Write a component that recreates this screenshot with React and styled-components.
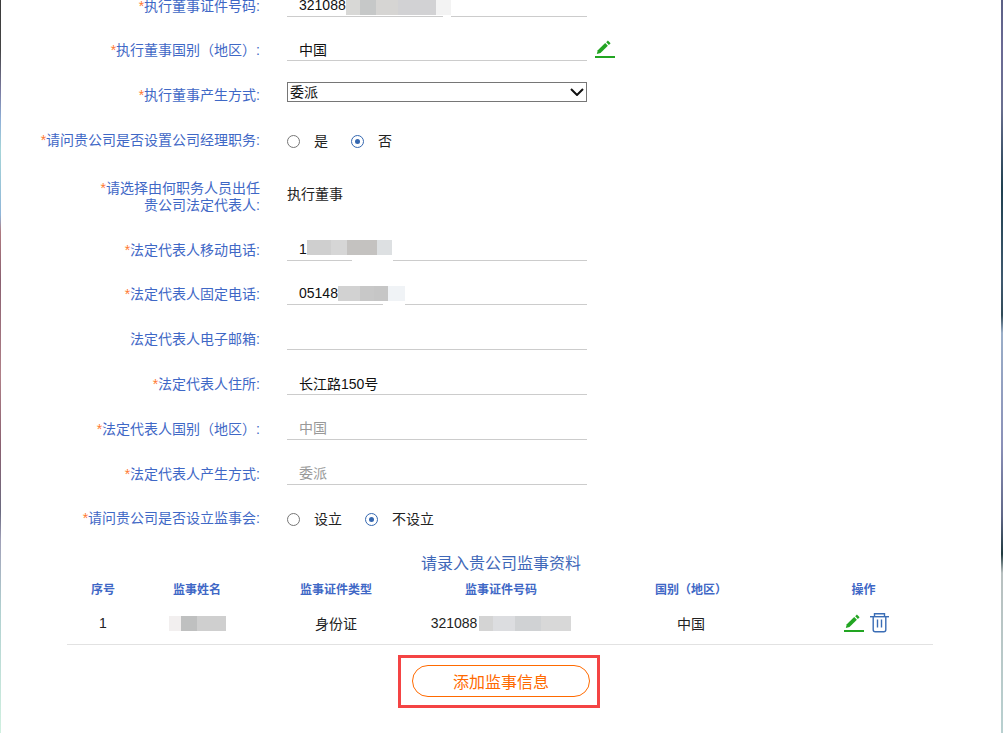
import React from "react";
import styled, { createGlobalStyle } from "styled-components";

const GlobalStyle = createGlobalStyle`
  html, body {
    margin: 0;
    padding: 0;
    background: #fff;
    overflow: hidden;
  }
  body {
    font-family: "Liberation Sans", "Noto Sans CJK SC", sans-serif;
    font-size: 14px;
  }
`;

const Page = styled.div`
  display: flex;
  width: 1003px;
  height: 733px;
  overflow: hidden;
`;

const EdgeStrip = styled.div`
  flex: none;
  width: ${(props) => props.$width}px;
  background: ${(props) => props.$colors};
`;

const Content = styled.main`
  flex: 1;
  display: flex;
  flex-direction: column;
`;

const Row = styled.div`
  display: flex;
  align-items: flex-end;
  height: ${(props) => props.$height}px;
`;

const Label = styled.label`
  flex: none;
  width: 259px;
  margin-right: 27px;
  margin-bottom: ${(props) => (props.$tight ? "-1px" : "1px")};
  text-align: right;
  color: #3f68c6;
  font-size: 14px;
  line-height: ${(props) => (props.$tight ? "17px" : "20px")};
  white-space: nowrap;
`;

const Required = styled.span`
  color: #ff7a33;
`;

const Field = styled.div`
  flex: none;
  display: flex;
  align-items: center;
  box-sizing: border-box;
  width: 300px;
  height: 21px;
  padding: 0 0 ${(props) => (props.$muted ? "4px" : "2px")} 12px;
  border-bottom: 1px solid #ccc;
  font-size: 14px;
  color: ${(props) => (props.$muted ? "#999" : "#111")};
`;

const Blur = styled.span`
  position: relative;
  flex: none;
  display: inline-block;
  width: ${(props) => props.$width}px;
  height: 15px;
  margin-top: ${(props) => props.$top || 0}px;
  margin-bottom: ${(props) => props.$bottom || 0}px;
  background: ${(props) => props.$bands};
  filter: blur(0.6px);

  /* white smear of the redaction, it runs over the underline */
  &::after {
    content: "";
    position: absolute;
    display: ${(props) => (props.$smearWidth ? "block" : "none")};
    left: ${(props) => props.$smearLeft}px;
    width: ${(props) => props.$smearWidth}px;
    bottom: -${(props) => props.$smearDepth}px;
    height: ${(props) => props.$smearDepth}px;
    background: #fff;
  }
`;

const SelectBox = styled.div`
  position: relative;
  flex: none;
  display: flex;
  width: 300px;
  height: 20px;
  margin-bottom: 4px;
`;

const IdSelect = styled.select`
  appearance: none;
  box-sizing: border-box;
  width: 100%;
  height: 100%;
  margin: 0;
  padding: 0 0 1px 2px;
  border: 1px solid #767676;
  border-radius: 0;
  background: #fff;
  color: #111;
  font-family: inherit;
  font-size: 14px;
`;

const SelectArrow = styled.svg`
  position: absolute;
  top: 6px;
  right: 3px;
  pointer-events: none;
`;

const EditButton = styled.span`
  display: flex;
  margin: 0 0 3px 8px;
`;

const RadioGroup = styled.div`
  display: flex;
  align-items: center;
  height: 20px;
  margin-bottom: 1px;
  font-size: 14px;
  color: #222;
`;

const RadioItem = styled.span`
  display: flex;
  align-items: center;
  margin-right: ${(props) => props.$gap}px;
`;

const RadioMark = styled.span`
  box-sizing: border-box;
  display: flex;
  align-items: center;
  justify-content: center;
  width: 13px;
  height: 13px;
  margin: 2px 14px 0 0;
  border: 1px solid ${(props) => (props.$checked ? "#3467b0" : "#767676")};
  border-radius: 50%;
  &::after {
    content: "";
    display: ${(props) => (props.$checked ? "block" : "none")};
    width: 5px;
    height: 5px;
    border-radius: 50%;
    background: #3467b0;
  }
`;

const PlainValue = styled.div`
  margin-bottom: 9px;
  font-size: 14px;
  line-height: 20px;
  color: #222;
`;

const Section = styled.section`
  width: 866px;
  margin-left: 66px;
`;

const SectionTitle = styled.h3`
  margin: 25px 0 0;
  padding-left: 2px;
  text-align: center;
  color: #3f68b8;
  font-size: 16px;
  font-weight: normal;
  line-height: 20px;
`;

const TableRow = styled.div`
  display: grid;
  grid-template-columns: 72px 116px 162px 168px 212px 133px;
  align-items: center;
  box-sizing: border-box;
  height: ${(props) => props.$height}px;
  padding-bottom: ${(props) => props.$pad}px;
  border-bottom: ${(props) => (props.$line ? "1px solid #e2e2e2" : "none")};
`;

const HeadCell = styled.div`
  text-align: center;
  color: #3f68c6;
  font-size: 12px;
  font-weight: bold;
`;

const Cell = styled.div`
  display: flex;
  align-items: center;
  justify-content: center;
  font-size: 14px;
  color: #222;
`;

const Actions = styled(Cell)`
  gap: 6px;
  padding-left: 5px;
`;

const AddBox = styled.div`
  display: inline-flex;
  align-self: flex-start;
  margin: 10px 0 0 397px;
  padding: 7px 7px 8px 11px;
  border: 3px solid #f44444;
`;

const AddButton = styled.button`
  box-sizing: border-box;
  width: 178px;
  height: 32px;
  padding: 0;
  border: 1px solid #ff6a00;
  border-radius: 16px;
  background: #fff;
  color: #ff6a00;
  font-family: inherit;
  font-size: 16px;
  cursor: pointer;
`;

const PencilIcon = () => (
  <svg width="20" height="18" viewBox="0 0 20 18" fill="#22a522">
    <rect x="0" y="16" width="20" height="2" />
    <path d="M1.8 14l1-3.8 7.4-7.1 2.7 2.7-7.4 7.1z" />
    <path d="M11.2 2.2l1.7-1.7 2.7 2.7-1.7 1.7z" />
  </svg>
);

const TrashIcon = () => (
  <svg width="19" height="20" viewBox="0 0 19 20" fill="none" stroke="#3a6db5" strokeWidth="1.4">
    <path d="M0 3.7h19" />
    <path d="M4.5 3.2V0.8h10v2.4" />
    <path d="M3.2 4v12.8c0 1.3 0.8 2 2 2h8.6c1.2 0 2-0.7 2-2V4" />
    <path d="M7.5 6.5v8M11.5 6.5v8" />
  </svg>
);

const Radio = ({ label, checked, gap }) => (
  <RadioItem $gap={gap}>
    <RadioMark $checked={checked} />
    {label}
  </RadioItem>
);

const leftEdge =
  "linear-gradient(#3a3a3a 0, #444 50px, #7a7aa0 90px, #8fb0d8 120px, #a5d5d8 150px, #8fb5d8 215px, #b07a80 232px, #8a6070 280px, #b08088 375px, #8a6070 446px, #6a6a80 512px, #a0a0b8 540px, #b0d0d0 610px, #d0f0e0 733px)";
const rightEdge =
  "linear-gradient(#5a6085 0, #6a6a95 47px, #6a7090 108px, #1f4050 188px, #405a70 282px, #304a58 315px, #9aaec8 333px, #8a90b8 446px, #606888 516px, #203a40 554px, #b8c0c0 573px, #b8d0d0 733px)";

const Asterisk = () => <Required>*</Required>;

const App = () => {
  return (
    <Page>
      <GlobalStyle />
      <EdgeStrip $width={1} $colors={leftEdge} />
      <Content>
        <Row $height={17}>
          <Label><Asterisk />执行董事证件号码:</Label>
          <Field>
            321088
            <Blur
              $width={105}
              $top={5}
              $smearLeft={97}
              $smearWidth={8}
              $smearDepth={3}
              $bands="linear-gradient(90deg, #d8d8d6 0 14px, #c6c8c8 14px 30px, #d6d5d3 30px 52px, #d2d2d4 52px 90px, #f3f3f3 90px)"
            />
          </Field>
        </Row>
        <Row $height={44}>
          <Label><Asterisk />执行董事国别（地区）:</Label>
          <Field>中国</Field>
          <EditButton><PencilIcon /></EditButton>
        </Row>
        <Row $height={45}>
          <Label><Asterisk />执行董事产生方式:</Label>
          <SelectBox>
            <IdSelect defaultValue="委派">
              <option>委派</option>
            </IdSelect>
            <SelectArrow width="14" height="8" viewBox="0 0 14 8" fill="none" stroke="#111" strokeWidth="2">
              <path d="M1 1l6 6 6-6" />
            </SelectArrow>
          </SelectBox>
        </Row>
        <Row $height={45}>
          <Label><Asterisk />请问贵公司是否设置公司经理职务:</Label>
          <RadioGroup>
            <Radio label="是" gap={23} />
            <Radio label="否" checked />
          </RadioGroup>
        </Row>
        <Row $height={62}>
          <Label $tight>
            <Asterisk />请选择由何职务人员出任
            <br />
            贵公司法定代表人:
          </Label>
          <PlainValue>执行董事</PlainValue>
        </Row>
        <Row $height={48}>
          <Label><Asterisk />法定代表人移动电话:</Label>
          <Field>
            1
            <Blur
              $width={85}
              $bottom={3}
              $smearLeft={45}
              $smearWidth={41}
              $smearDepth={7}
              $bands="linear-gradient(90deg, #cfcfcf 0 24px, #d6d6d6 24px 40px, #c4c2c0 40px 70px, #dde0e2 70px)"
            />
          </Field>
        </Row>
        <Row $height={44}>
          <Label><Asterisk />法定代表人固定电话:</Label>
          <Field>
            05148
            <Blur
              $width={67}
              $smearLeft={45}
              $smearWidth={22}
              $smearDepth={6}
              $bands="linear-gradient(90deg, #d2d2d2 0 22px, #c8c8c8 22px 36px, #c6c6c6 36px 50px, #f0f3f6 50px)"
            />
          </Field>
        </Row>
        <Row $height={45}>
          <Label>法定代表人电子邮箱:</Label>
          <Field />
        </Row>
        <Row $height={45}>
          <Label><Asterisk />法定代表人住所:</Label>
          <Field>长江路150号</Field>
        </Row>
        <Row $height={45}>
          <Label><Asterisk />法定代表人国别（地区）:</Label>
          <Field $muted>中国</Field>
        </Row>
        <Row $height={45}>
          <Label><Asterisk />法定代表人产生方式:</Label>
          <Field $muted>委派</Field>
        </Row>
        <Row $height={44}>
          <Label><Asterisk />请问贵公司是否设立监事会:</Label>
          <RadioGroup>
            <Radio label="设立" gap={23} />
            <Radio label="不设立" checked />
          </RadioGroup>
        </Row>
        <Section>
          <SectionTitle>请录入贵公司监事资料</SectionTitle>
          <TableRow $height={31} $pad={2}>
            <HeadCell>序号</HeadCell>
            <HeadCell>监事姓名</HeadCell>
            <HeadCell>监事证件类型</HeadCell>
            <HeadCell>监事证件号码</HeadCell>
            <HeadCell>国别（地区）</HeadCell>
            <HeadCell>操作</HeadCell>
          </TableRow>
          <TableRow $height={40} $pad={3} $line>
            <Cell>1</Cell>
            <Cell>
              <Blur
                $width={57}
                $bands="linear-gradient(90deg, #f2efef 0 12px, #bfc0c0 12px 28px, #cfcfcf 28px)"
              />
            </Cell>
            <Cell>身份证</Cell>
            <Cell>
              321088
              <Blur
                $width={94}
                $bands="linear-gradient(90deg, #fff 0 2px, #d4d4d4 2px 16px, #dcdde0 16px 38px, #d0d2d4 38px 64px, #d8d8d8 64px)"
              />
            </Cell>
            <Cell>中国</Cell>
            <Actions>
              <PencilIcon />
              <TrashIcon />
            </Actions>
          </TableRow>
        </Section>
        <AddBox>
          <AddButton>添加监事信息</AddButton>
        </AddBox>
      </Content>
      <EdgeStrip $width={2} $colors={rightEdge} />
    </Page>
  );
};

export default App;
